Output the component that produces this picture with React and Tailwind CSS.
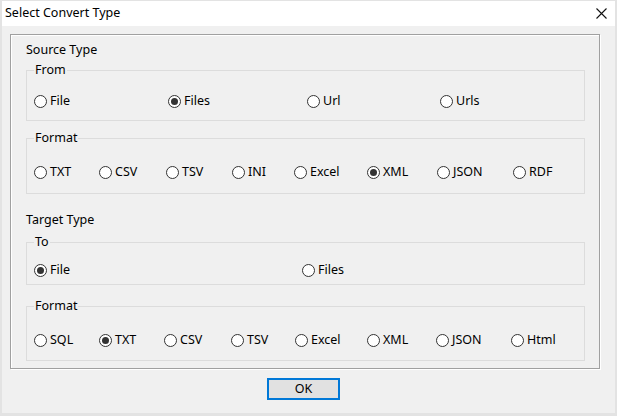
import React, { useState } from 'react';

const Radio = ({ label, checked, onClick, className }) => (
  <div className={`flex items-center h-4 cursor-default ${className}`} onClick={onClick}>
    <span className="w-[13px] h-[13px] rounded-full border border-[#333] bg-white flex items-center justify-center shrink-0">
      {checked && <span className="w-[7px] h-[7px] rounded-full bg-[#333]" />}
    </span>
    <span className="ml-[3px] leading-4">{label}</span>
  </div>
);

const Group = ({ title, items, value, onChange, rowClass }) => (
  <fieldset className="border border-[#dcdcdc] pl-[7px] pr-2 min-w-0">
    <legend className="px-[1px] leading-4">{title}</legend>
    <div className={`flex ${rowClass}`}>
      {items.map(([name, w]) => (
        <Radio key={name} label={name} checked={value === name} onClick={() => onChange(name)} className={w} />
      ))}
    </div>
  </fieldset>
);

const App = () => {
  const [from, setFrom] = useState('Files');
  const [srcFmt, setSrcFmt] = useState('XML');
  const [to, setTo] = useState('File');
  const [dstFmt, setDstFmt] = useState('TXT');

  return (
    <div className="w-[617px] h-[416px] bg-[#f0f0f0] border-t border-l-2 border-r-2 border-b-[3px] border-[#e3e3e3] flex flex-col text-[12.5px] text-black" style={{ fontFamily: '"Noto Sans", "Liberation Sans", sans-serif' }}>
      {/* title bar */}
      <div className="h-[25px] bg-white flex items-center justify-between pl-[3px] pr-[8px] shrink-0">
        <span>Select Convert Type</span>
        <svg width="11" height="11" viewBox="0 0 11 11" className="text-[#111]">
          <path d="M0.5 0.5 L10.5 10.5 M10.5 0.5 L0.5 10.5" stroke="currentColor" strokeWidth="1.1" fill="none" />
        </svg>
      </div>

      {/* outer box */}
      <div className="ml-[8px] mt-[8px] w-[590px] h-[335px] border border-[#a0a0a0] shadow-[1px_1px_0_#fff,inset_1px_1px_0_#fff] pl-[15px] pr-[14px] pt-[7px] flex flex-col">
        <div className="leading-4">Source Type</div>

        <div className="mt-[4px]">
          <Group
            title="From"
            value={from}
            onChange={setFrom}
            rowClass="mt-[15px] mb-[11px]"
            items={[['File', 'w-[134px]'], ['Files', 'w-[139px]'], ['Url', 'w-[133px]'], ['Urls', 'w-[60px]']]}
          />
        </div>

        <div className="mt-[9px]">
          <Group
            title="Format"
            value={srcFmt}
            onChange={setSrcFmt}
            rowClass="mt-[18px] mb-[13px]"
            items={[
              ['TXT', 'w-[65px]'], ['CSV', 'w-[67px]'], ['TSV', 'w-[66px]'], ['INI', 'w-[62px]'],
              ['Excel', 'w-[73px]'], ['XML', 'w-[70px]'], ['JSON', 'w-[76px]'], ['RDF', 'w-[50px]'],
            ]}
          />
        </div>

        <div className="leading-4 mt-[18px]">Target Type</div>

        <div className="mt-[6px]">
          <Group
            title="To"
            value={to}
            onChange={setTo}
            rowClass="mt-[12px] mb-[6px]"
            items={[['File', 'w-[268px]'], ['Files', 'w-[60px]']]}
          />
        </div>

        <div className="mt-[13px]">
          <Group
            title="Format"
            value={dstFmt}
            onChange={setDstFmt}
            rowClass="mt-[18px] mb-[12px]"
            items={[
              ['SQL', 'w-[65px]'], ['TXT', 'w-[65px]'], ['CSV', 'w-[67px]'], ['TSV', 'w-[64px]'],
              ['Excel', 'w-[72px]'], ['XML', 'w-[69px]'], ['JSON', 'w-[75px]'], ['Html', 'w-[50px]'],
            ]}
          />
        </div>
      </div>

      {/* footer */}
      <div className="flex pl-[265px] mt-[9px]">
        <button className="w-[73px] h-[22px] border-2 border-[#0078d7] bg-[#e1e1e1] leading-4 flex items-center justify-center">
          OK
        </button>
      </div>
    </div>
  );
};

export default App;
